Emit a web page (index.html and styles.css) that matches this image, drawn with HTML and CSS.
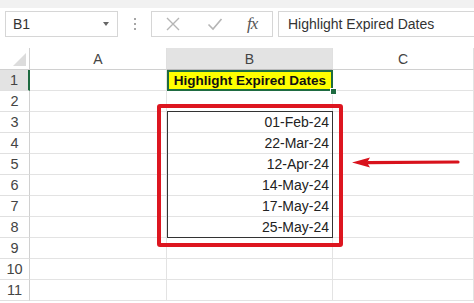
FILE: index.html
```html
<!DOCTYPE html>
<html>
<head>
<meta charset="utf-8">
<link rel="stylesheet" href="styles.css">
</head>
<body>
<div class="app">
  <div class="strip"></div>
  <div class="toolbar">
    <div class="namebox"><span>B1</span><span class="caret"></span></div>
    <div class="dots"><i></i><i></i><i></i></div>
    <div class="fbtns">
      <svg class="ico" width="16" height="16" viewBox="0 0 16 16"><path d="M2 2L14 14M14 2L2 14" stroke="#b5b5b5" stroke-width="1.4" fill="none"/></svg>
      <svg class="ico" width="16" height="16" viewBox="0 0 16 16"><path d="M1.5 8.5L6 13L14.5 3" stroke="#b5b5b5" stroke-width="1.6" fill="none"/></svg>
      <span class="fx">fx</span>
    </div>
    <div class="formula">Highlight Expired Dates</div>
  </div>
  <div class="sheet">
    <div class="corner"><span class="tri"></span></div>
    <div class="ch">A</div>
    <div class="ch sel">B</div>
    <div class="ch">C</div>

    <div class="rh sel">1</div><div class="c"></div><div class="c b1">Highlight Expired Dates<span class="handle"></span></div><div class="c"></div>
    <div class="rh">2</div><div class="c"></div><div class="c"></div><div class="c"></div>
    <div class="rh">3</div><div class="c"></div><div class="c d">01-Feb-24</div><div class="c"></div>
    <div class="rh">4</div><div class="c"></div><div class="c d">22-Mar-24</div><div class="c"></div>
    <div class="rh">5</div><div class="c"></div><div class="c d">12-Apr-24</div><div class="c"></div>
    <div class="rh">6</div><div class="c"></div><div class="c d">14-May-24</div><div class="c"></div>
    <div class="rh">7</div><div class="c"></div><div class="c d">17-May-24</div><div class="c"></div>
    <div class="rh">8</div><div class="c"></div><div class="c d">25-May-24</div><div class="c"></div>
    <div class="rh">9</div><div class="c"></div><div class="c"></div><div class="c"></div>
    <div class="rh">10</div><div class="c"></div><div class="c"></div><div class="c"></div>
    <div class="rh">11</div><div class="c"></div><div class="c"></div><div class="c"></div>

    <div class="box"></div>
  </div>
  <div class="redbox"></div>
  <svg class="arrow" width="112" height="16" viewBox="0 0 112 16">
    <path d="M18 7.6L108 7" stroke="#d8121c" stroke-width="3.2" stroke-linecap="round" fill="none"/>
    <path d="M2 7.5L20 2.5L17 7.5L20 12.5Z" fill="#d8121c"/>
  </svg>
</div>
</body>
</html>
```
FILE: styles.css
```css
* { box-sizing: border-box; }
html, body { margin: 0; padding: 0; background: #fff; }
body { font-family: "Liberation Sans", Arial, sans-serif; color: #222; width: 474px; height: 303px; overflow: hidden; }
.app { position: relative; width: 474px; height: 303px; }
.strip { height: 8px; background: #f1f1f1; }
.toolbar { display: flex; align-items: stretch; height: 26px; margin-top: 3px; padding-left: 5px; }
.namebox { width: 113px; border: 1px solid #d6d6d6; display: flex; align-items: center; justify-content: space-between; padding: 0 8px 0 7px; font-size: 14px; color: #333; }
.caret { width: 0; height: 0; border-left: 3.5px solid transparent; border-right: 3.5px solid transparent; border-top: 4px solid #666; }
.dots { width: 33px; display: flex; flex-direction: column; align-items: center; justify-content: center; gap: 3px; }
.dots i { display: block; width: 2px; height: 2px; background: #888; border-radius: 1px; }
.fbtns { width: 122px; border: 1px solid #d6d6d6; display: flex; align-items: center; padding-left: 13px; }
.fbtns .ico { margin-right: 26px; }
.fbtns .ico + .ico { margin-right: 24px; }
.fx { font-family: "Liberation Serif", serif; font-style: italic; font-size: 17px; color: #555; letter-spacing: -1px; }
.formula { flex: 1; margin-left: 5px; border: 1px solid #d6d6d6; border-right: none; font-size: 14px; color: #333; display: flex; align-items: center; padding-left: 9px; }
.sheet { position: relative; margin-top: 11px; display: grid; grid-template-columns: 30px 137px 166px 141px; grid-template-rows: 22px repeat(11, 21px); }
.corner { border-right: 1px solid #d0d0d0; border-bottom: 1px solid #d0d0d0; position: relative; }
.tri { position: absolute; right: 3px; bottom: 3px; width: 0; height: 0; border-left: 13px solid transparent; border-bottom: 13px solid #dcdcdc; }
.ch { border-right: 1px solid #e0e0e0; border-bottom: 1px solid #d0d0d0; display: flex; align-items: center; justify-content: center; font-size: 14px; color: #444; background: #fff; }
.ch.sel { background: #e3e3e3; border-bottom: 1px solid #bbb; }
.rh { border-right: 1px solid #d0d0d0; border-bottom: 1px solid #e0e0e0; display: flex; align-items: center; justify-content: center; font-size: 14.5px; color: #444; background: #fff; }
.rh.sel { background: #e3e3e3; border-right: 2px solid #1e6b41; }
.c { border-right: 1px solid #e3e3e3; border-bottom: 1px solid #e3e3e3; font-size: 14px; color: #222; }
.b1 { background: #ffff00; font-weight: bold; font-size: 13.5px; color: #111; display: flex; align-items: center; justify-content: center; box-shadow: inset 0 0 0 2px #1e6b41; position: relative; border: none; }
.handle { position: absolute; right: -3px; bottom: -3px; width: 5px; height: 5px; background: #1e6b41; border: 1px solid #fff; box-sizing: content-box; margin: -1px; }
.d { display: flex; align-items: center; justify-content: flex-end; padding-right: 3px; }
.box { position: absolute; grid-column: 3 / 4; grid-row: 4 / 10; top: -1px; left: 0; right: 0; bottom: 0; border: 1px solid #333; pointer-events: none; }
.redbox { position: absolute; left: 157px; top: 104px; width: 186px; height: 143px; border: 4px solid #dd1620; border-radius: 3px; }
.arrow { position: absolute; left: 350px; top: 155px; }
```
